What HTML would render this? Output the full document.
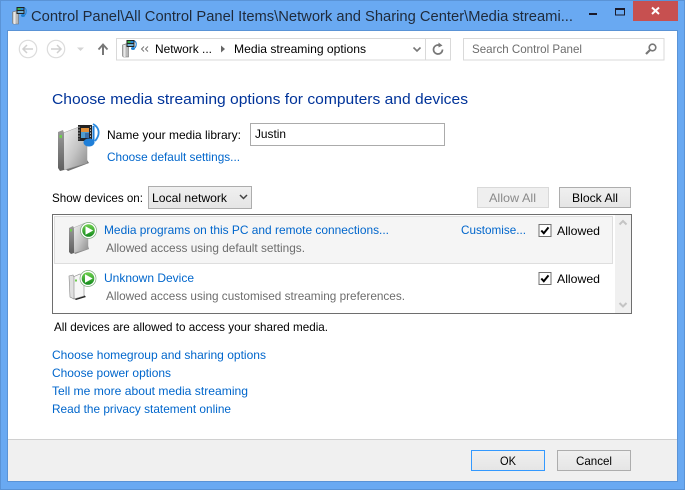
<!DOCTYPE html>
<html><head><meta charset="utf-8"><style>
html,body{margin:0;padding:0;width:685px;height:490px;overflow:hidden;background:#69a9f2}
svg{display:block}
text{font-family:"Liberation Sans",sans-serif;font-size:12px;fill:#000}
.l{fill:#0066cc}.g{fill:#6d6d6d}
</style></head><body>
<svg width="685" height="490" viewBox="0 0 685 490" xmlns="http://www.w3.org/2000/svg">
<defs>
<linearGradient id="b" x1="0" y1="0" x2="0" y2="1"><stop offset="0" stop-color="#f0f0f0"/><stop offset="1" stop-color="#e5e5e5"/></linearGradient>
<linearGradient id="dv" x1="0" y1="0" x2="1" y2="1"><stop offset="0" stop-color="#f2f2f2"/><stop offset=".55" stop-color="#c4c4c4"/><stop offset="1" stop-color="#8c8c8c"/></linearGradient>
<linearGradient id="df" x1="0" y1="0" x2="0" y2="1"><stop offset="0" stop-color="#9a9a9a"/><stop offset="1" stop-color="#5f5f5f"/></linearGradient>
<linearGradient id="gr" x1="0" y1="0" x2="0" y2="1"><stop offset="0" stop-color="#6fd04f"/><stop offset="1" stop-color="#128a1c"/></linearGradient>
<g id="play"><circle r="8" fill="#fff" stroke="#7aa87a" stroke-width=".7"/><circle r="6.300" fill="url(#gr)"/><path d="M-3-4.300 4.700 0-3 4.300z" fill="#fff"/></g>
<g id="chk"><rect x=".5" y=".5" width="12" height="12" fill="#fff" stroke="#707070"/><path d="M2.800 6.500 5.300 9.200 10 3.400" fill="none" stroke="#000" stroke-width="2"/></g>
<g id="si">
<path d="M0 5 6 3V17H1L0 16z" fill="#b8b8b8" stroke="#707070" stroke-width=".6"/>
<rect x="1" y="5" width="2" height="12" fill="#e8e8e8"/>
<rect x="4" y="0" width="8" height="7" fill="#222"/><rect x="5" y="1" width="3" height="2" fill="#39b54a"/><rect x="8" y="1" width="3" height="2" fill="#2a86d8"/><rect x="5" y="4" width="6" height="2" fill="#70b0d8"/>
<path d="M12 1C14 2 14.500 5 12.500 8" fill="none" stroke="#2a86d8" stroke-width="1.200"/><ellipse cx="10.500" cy="8.500" rx="2" ry="1.500" fill="#1f7fd0"/>
</g>
</defs>
<rect width="685" height="490" fill="#69a9f2"/>
<rect x=".5" y=".5" width="684" height="489" fill="none" stroke="#5a93d6"/>
<!-- title -->
<use href="#si" x="12.500" y="7"/>
<text x="31" y="21" style="font-size:15px;fill:#1f2a3a" textLength="542" lengthAdjust="spacingAndGlyphs">Control Panel\All Control Panel Items\Network and Sharing Center\Media streami...</text>
<rect x="589" y="13" width="8" height="2" fill="#1a1a2a"/>
<rect x="615.500" y="8.500" width="9" height="6.500" fill="none" stroke="#1a1a2a"/><rect x="615" y="8" width="10" height="2" fill="#1a1a2a"/>
<rect x="633" y="1" width="45" height="20" fill="#c75050"/>
<path d="M652 7.500 659 14M659 7.500 652 14" stroke="#fff" stroke-width="2"/>
<!-- client -->
<rect x="8" y="31" width="669" height="450" fill="#fff"/>
<rect x="7.500" y="30.500" width="670" height="451" fill="none" stroke="#5a93d6"/>
<!-- nav -->
<g fill="none" stroke="#dcdcdc" stroke-width="1.200">
<circle cx="28" cy="49" r="8.700"/><circle cx="56" cy="49" r="8.700"/></g>
<g fill="none" stroke="#d0d0d0" stroke-width="1.500">
<path d="M33 49H23.500M27 45 23 49 27 53"/><path d="M51 49H60.500M57 45 61 49 57 53"/></g>
<path d="M77 47.500h7l-3.500 3.500z" fill="#d4d4d4"/>
<path d="M103 44.500V55" stroke="#777" stroke-width="2"/><path d="M98.500 49.500 103 44.500 107.500 49.500" fill="none" stroke="#777" stroke-width="1.800"/>
<rect x="116.500" y="38.500" width="334" height="21.500" fill="#fff" stroke="#d9d9d9"/>
<path d="M425.500 39V60" stroke="#d9d9d9"/>
<use href="#si" x="122.500" y="40"/>
<path d="M144 46.500 141.500 49 144 51.500M148 46.500 145.500 49 148 51.500" fill="none" stroke="#777"/>
<text x="155" y="53" textLength="57" lengthAdjust="spacingAndGlyphs">Network ...</text>
<path d="M221 45.500 225 49 221 52.500z" fill="#666"/>
<text x="234" y="53" textLength="132" lengthAdjust="spacingAndGlyphs">Media streaming options</text>
<path d="M413.500 47.500 417 51 420.500 47.500" fill="none" stroke="#777" stroke-width="1.600"/>
<path d="M442.500 49.500A4.500 4.500 0 1 1 440 45.500" fill="none" stroke="#777" stroke-width="1.700"/><path d="M438.500 42.500 442.500 45.500 438.500 47.500z" fill="#777"/>
<rect x="463.500" y="38.500" width="200.500" height="21.500" fill="#fff" stroke="#d9d9d9"/>
<text x="472" y="53" class="g" textLength="110" lengthAdjust="spacingAndGlyphs">Search Control Panel</text>
<circle cx="652.500" cy="47.500" r="3.300" fill="none" stroke="#777" stroke-width="1.600"/><path d="M650 50 646 54" stroke="#777" stroke-width="2.200"/>
<!-- heading -->
<text x="52" y="104" style="font-size:15px;fill:#003399" textLength="416" lengthAdjust="spacingAndGlyphs">Choose media streaming options for computers and devices</text>
<!-- big icon -->
<path d="M64 168 87 160 89 163 68 171z" fill="#444" opacity=".75"/>
<path d="M63 133 84 125 87 127V163L64 170z" fill="url(#dv)" stroke="#9a9a9a" stroke-width=".5"/>
<path d="M58 132 63 130 64 133V170L60 171 58 168z" fill="url(#df)"/>
<rect x="59.500" y="135" width="2.500" height="3" fill="#6fce4f"/>
<rect x="78" y="125" width="14" height="16" fill="#222"/><rect x="81" y="128" width="8" height="10" fill="#4f9ed0"/><rect x="81" y="128" width="8" height="4" fill="#e0903a"/><rect x="85" y="133" width="4" height="5" fill="#3a6fa8"/>
<path d="M79 126.500v13M90.500 126.500v13" stroke="#bbb" stroke-width="1" stroke-dasharray="1.500 1.500"/>
<path d="M93 124C99 127 101 134 95 141" fill="none" stroke="#2a8ae0" stroke-width="1.800"/>
<ellipse cx="89" cy="142.500" rx="5.500" ry="4" fill="#1f7fd8"/><path d="M92.500 126h2V143h-2z" fill="#1f7fd8"/>
<text x="107" y="139" textLength="134" lengthAdjust="spacingAndGlyphs">Name your media library:</text>
<rect x="250.500" y="123.500" width="194" height="22" fill="#fff" stroke="#ababab"/>
<text x="255" y="138" textLength="31" lengthAdjust="spacingAndGlyphs">Justin</text>
<text x="107" y="161" class="l" textLength="133" lengthAdjust="spacingAndGlyphs">Choose default settings...</text>
<!-- toolbar -->
<text x="52" y="202" textLength="91" lengthAdjust="spacingAndGlyphs">Show devices on:</text>
<rect x="148.500" y="186.500" width="103" height="22" fill="url(#b)" stroke="#adadad"/>
<text x="152" y="202" textLength="75" lengthAdjust="spacingAndGlyphs">Local network</text>
<path d="M240 195 243.500 198.500 247 195" fill="none" stroke="#444" stroke-width="1.500"/>
<rect x="477.500" y="187.500" width="71" height="20" fill="#efefef" stroke="#d9d9d9"/>
<text x="489" y="202" style="fill:#8a8a8a" textLength="47" lengthAdjust="spacingAndGlyphs">Allow All</text>
<rect x="559.500" y="187.500" width="71" height="20" fill="url(#b)" stroke="#adadad"/>
<text x="572" y="202" textLength="46" lengthAdjust="spacingAndGlyphs">Block All</text>
<!-- list -->
<rect x="52.500" y="214.500" width="579" height="99" fill="#fff" stroke="#6e6e6e"/>
<rect x="615" y="215" width="16" height="98" fill="#f0f0f0"/>
<rect x="54.500" y="216.500" width="558" height="47" fill="#f5f5f5" stroke="#dedede"/>
<path d="M619.500 224.500 623 221 626.500 224.500" fill="none" stroke="#c4c4c4" stroke-width="2"/>
<path d="M619.500 303 623 306.500 626.500 303" fill="none" stroke="#c4c4c4" stroke-width="2"/>
<!-- row1 -->
<path d="M73 251 88 246 89 249 75 254z" fill="#555" opacity=".7"/>
<path d="M73 228 85 223 88 225V249L74 253z" fill="url(#dv)" stroke="#999" stroke-width=".4"/>
<path d="M69 228 73 226 74 228V253L71 254 69 252z" fill="url(#df)"/><rect x="70" y="229" width="2" height="2.500" fill="#6fce4f"/>
<use href="#play" x="88.500" y="230.500"/>
<text x="104" y="234" class="l" textLength="285" lengthAdjust="spacingAndGlyphs">Media programs on this PC and remote connections...</text>
<text x="106" y="252" class="g" textLength="199" lengthAdjust="spacingAndGlyphs">Allowed access using default settings.</text>
<text x="461" y="234" class="l" textLength="65" lengthAdjust="spacingAndGlyphs">Customise...</text>
<use href="#chk" x="538.500" y="224"/>
<text x="557" y="235" textLength="43" lengthAdjust="spacingAndGlyphs">Allowed</text>
<!-- row2 -->
<path d="M72 297 84 295 86 297 76 300z" fill="#222"/>
<path d="M73 277 80 274 84 276V296L74 299z" fill="#f7f7f7" stroke="#888" stroke-width=".6"/>
<path d="M69 276 73 275 74 277V299L70 297z" fill="#e0e0e0" stroke="#888" stroke-width=".6"/>
<rect x="75" y="279.500" width="2" height="2" fill="#6fce4f"/>
<use href="#play" x="88" y="278.500"/>
<text x="104" y="282" class="l" textLength="90" lengthAdjust="spacingAndGlyphs">Unknown Device</text>
<text x="106" y="300" class="g" textLength="299" lengthAdjust="spacingAndGlyphs">Allowed access using customised streaming preferences.</text>
<use href="#chk" x="538.500" y="272"/>
<text x="557" y="283" textLength="43" lengthAdjust="spacingAndGlyphs">Allowed</text>
<text x="54" y="331" textLength="274" lengthAdjust="spacingAndGlyphs">All devices are allowed to access your shared media.</text>
<!-- links -->
<text x="52" y="359" class="l" textLength="214" lengthAdjust="spacingAndGlyphs">Choose homegroup and sharing options</text>
<text x="52" y="377" class="l" textLength="119" lengthAdjust="spacingAndGlyphs">Choose power options</text>
<text x="52" y="395" class="l" textLength="196" lengthAdjust="spacingAndGlyphs">Tell me more about media streaming</text>
<text x="52" y="413" class="l" textLength="179" lengthAdjust="spacingAndGlyphs">Read the privacy statement online</text>
<!-- footer -->
<rect x="8" y="439" width="669" height="42" fill="#f0f0f0"/>
<rect x="8" y="439" width="669" height="1" fill="#d0d0d0"/>
<rect x="471.500" y="450.500" width="73" height="20" fill="url(#b)" stroke="#3399ff"/>
<text x="500" y="465" textLength="16" lengthAdjust="spacingAndGlyphs">OK</text>
<rect x="557.500" y="450.500" width="73" height="20" fill="url(#b)" stroke="#adadad"/>
<text x="576" y="465" textLength="36" lengthAdjust="spacingAndGlyphs">Cancel</text>
</svg>
</body></html>
